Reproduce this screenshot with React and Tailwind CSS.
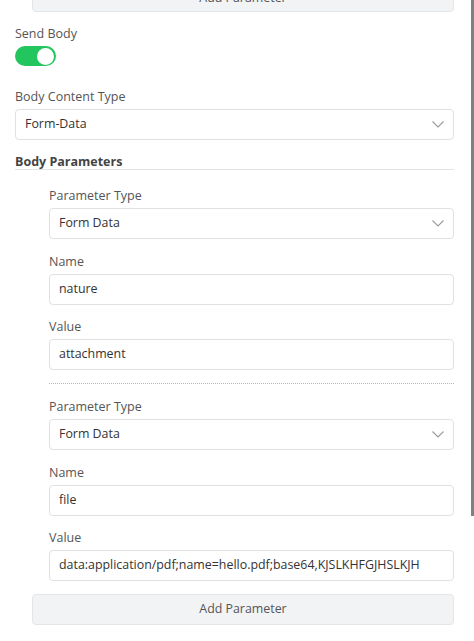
import React from 'react';

const font = { fontFamily: '"Open Sans", "Noto Sans", sans-serif' };

const Chevron = () => (
    <svg width="12" height="7" viewBox="0 0 12 7" fill="none" className="shrink-0">
        <path d="M0.5 0.5L6 6L11.5 0.5" stroke="#9a9a9a" strokeWidth="1.1" />
    </svg>
);

const Label = ({ children }) => (
    <div className="text-[12.5px] leading-[18px] text-[#555] mb-[3px]">{children}</div>
);

const Select = ({ value }) => (
    <div className="flex items-center justify-between h-[31px] pl-[9px] pr-[9px] border border-[#e1e1e1] rounded-[4px] bg-white text-[12.4px] text-[#333]">
        <span>{value}</span>
        <Chevron />
    </div>
);

const Input = ({ value }) => (
    <div className="flex items-center h-[31px] px-[9px] border border-[#e1e1e1] rounded-[4px] bg-white text-[12.4px] text-[#333] whitespace-nowrap overflow-hidden">
        {value}
    </div>
);

const AddButton = ({ className = '' }) => (
    <button className={'w-full h-[31px] flex items-center justify-center bg-[#f2f3f5] border border-[#e3e5e8] rounded-[4px] text-[12.4px] text-[#555] ' + className}>
        Add Parameter
    </button>
);

const ParamGroup = ({ name, value }) => (
    <div>
        <Label>Parameter Type</Label>
        <Select value="Form Data" />
        <div className="mt-[13.5px]">
            <Label>Name</Label>
            <Input value={name} />
        </div>
        <div className="mt-[13.5px]">
            <Label>Value</Label>
            <Input value={value} />
        </div>
    </div>
);

const App = () => {
    return (
        <div className="relative w-[474px] h-[641px] overflow-hidden bg-white" style={font}>
            <div className="-mt-[19px] pl-[15px] pr-[20px]">
                <div className="pl-[17px]">
                    <AddButton className="pt-[4px]" />
                </div>

                <div className="mt-[13px]">
                    <Label>Send Body</Label>
                    <div className="w-[41px] h-[20px] rounded-full bg-[#22c55e] flex items-center justify-end pr-[2px]">
                        <div className="w-[17px] h-[17px] rounded-full bg-white" />
                    </div>
                </div>

                <div className="mt-[22px]">
                    <Label>Body Content Type</Label>
                    <Select value="Form-Data" />
                </div>

                <div className="mt-[15px] text-[12.5px] leading-[14px] font-bold text-[#444] border-b border-[#e3e3e3]">
                    Body Parameters
                </div>

                <div className="pl-[34px] pt-[17px]">
                    <ParamGroup name="nature" value="attachment" />
                    <div className="mt-[13px] mb-[14px] border-t border-dotted border-[#b5b5b5]" />
                    <ParamGroup
                        name="file"
                        value="data:application/pdf;name=hello.pdf;base64,KJSLKHFGJHSLKJH"
                    />
                </div>

                <div className="pl-[17px] mt-[13px]">
                    <AddButton />
                </div>
            </div>

            <div className="absolute top-0 right-0 w-[3px] h-[516px] bg-[#808080]" />
        </div>
    );
};

export default App;
